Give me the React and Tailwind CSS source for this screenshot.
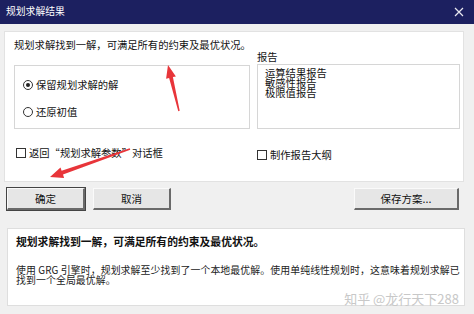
import React from "react";

const font = { fontFamily: '"Noto Sans CJK SC", "Noto Sans", sans-serif' };

function Radio({ checked, label }) {
  return (
    <div className="flex items-center h-[14px]">
      <span className="ml-[8px] w-[10px] h-[10px] rounded-full border border-[#333] bg-white flex items-center justify-center">
        {checked && <span className="w-[4px] h-[4px] rounded-full bg-[#222]" />}
      </span>
      <span className="ml-[3px] text-[10.3px] leading-[14px] text-[#111]">{label}</span>
    </div>
  );
}

function Check({ label }) {
  return (
    <div className="flex items-center h-[14px]">
      <span className="w-[10px] h-[10px] border border-[#333] bg-white" />
      <span className="ml-[3px] text-[10.3px] leading-[14px] text-[#111]">{label}</span>
    </div>
  );
}

function Btn({ children, w, def }) {
  return (
    <div
      className={`h-[22px] ${w} flex items-center justify-center bg-[#e6e6e6] text-[10.5px] text-[#111] border-t border-l border-t-[#fafafa] border-l-[#fafafa] border-b-[2px] border-r-[2px] border-b-[#6a6a6a] border-r-[#6a6a6a] ${def ? "outline outline-1 outline-[#444]" : ""}`}
    >
      {children}
    </div>
  );
}

export default function App() {
  return (
    <div className="relative w-[474px] h-[314px] bg-[#f0f0f0] overflow-hidden" style={font}>
      {/* title bar */}
      <div className="h-[24px] bg-[#1c2060] flex items-center justify-between pl-[6px] pr-[10px]">
        <span className="text-white text-[9.8px] leading-none">规划求解结果</span>
        <svg width="10" height="10" viewBox="0 0 10 10">
          <path d="M1 1L9 9M9 1L1 9" stroke="#e8e8f0" strokeWidth="1.2" />
        </svg>
      </div>

      {/* top panel */}
      <div className="ml-[4px] mt-[7px] w-[460px] h-[151px] bg-white border border-[#e2e2e2] flex">
        <div className="ml-[9px] w-[236px] pt-[5px] flex flex-col">
          <div className="h-[16px] text-[10.3px] leading-[16px] text-[#111] whitespace-nowrap">
            规划求解找到一解，可满足所有的约束及最优状况。
          </div>
          <div className="mt-[12px] h-[64px] border border-[#d6d6d6] pt-[12px] flex flex-col gap-[13px]">
            <Radio checked label="保留规划求解的解" />
            <Radio label="还原初值" />
          </div>
          <div className="mt-[17px] ml-[2px]">
            <Check label={"返回\u201c规划求解参数\u201d对话框"} />
          </div>
        </div>
        <div className="ml-[7px] w-[203px] pt-[18px] flex flex-col">
          <div className="h-[14px] text-[10.3px] leading-[14px] text-[#111]">报告</div>
          <div className="h-[65px] border border-[#d6d6d6] pt-[3px] pl-[7px] flex flex-col text-[10.3px] leading-[10px] text-[#111]">
            <span>运算结果报告</span>
            <span>敏感性报告</span>
            <span>极限值报告</span>
          </div>
          <div className="mt-[19px]">
            <Check label="制作报告大纲" />
          </div>
        </div>
      </div>

      {/* buttons */}
      <div className="mt-[6px] ml-[7px] w-[452px] flex items-center">
        <Btn w="w-[78px]" def>确定</Btn>
        <div className="ml-[8px]">
          <Btn w="w-[78px]">取消</Btn>
        </div>
        <div className="ml-auto">
          <Btn w="w-[105px]">保存方案...</Btn>
        </div>
      </div>

      {/* bottom panel */}
      <div className="mt-[18px] ml-[7px] w-[458px] h-[78px] bg-white border border-[#dedede] pl-[8px] pt-[4px] flex flex-col">
        <div className="text-[10.8px] leading-[16px] font-bold text-[#111] whitespace-nowrap">
          规划求解找到一解，可满足所有的约束及最优状况。
        </div>
        <div className="mt-[16px] text-[9.9px] leading-[10px] text-[#222] tracking-[0.1px] w-[445px]">
          使用 GRG 引擎时，规划求解至少找到了一个本地最优解。使用单纯线性规划时，这意味着规划求解已找到一个全局最优解。
        </div>
        <div className="mt-[6px] self-end pr-[5px] text-[13px] leading-[16px] text-[#c8c8c8] whitespace-nowrap">
          知乎 @龙行天下288
        </div>
      </div>

      {/* red arrows overlay */}
      <svg className="absolute inset-0 pointer-events-none" width="474" height="314" viewBox="0 0 474 314">
        <polygon
          points="168,65 175.9,76.5 172.9,77.1 179.7,110.8 178.3,111.2 169.1,78.1 166.1,78.8"
          fill="#e8353a"
        />
        <polygon
          points="50,177 60.5,167.5 61.6,170.8 129.7,148.2 130.3,149.8 63,174.6 64.1,177.9"
          fill="#e8353a"
        />
      </svg>
    </div>
  );
}
